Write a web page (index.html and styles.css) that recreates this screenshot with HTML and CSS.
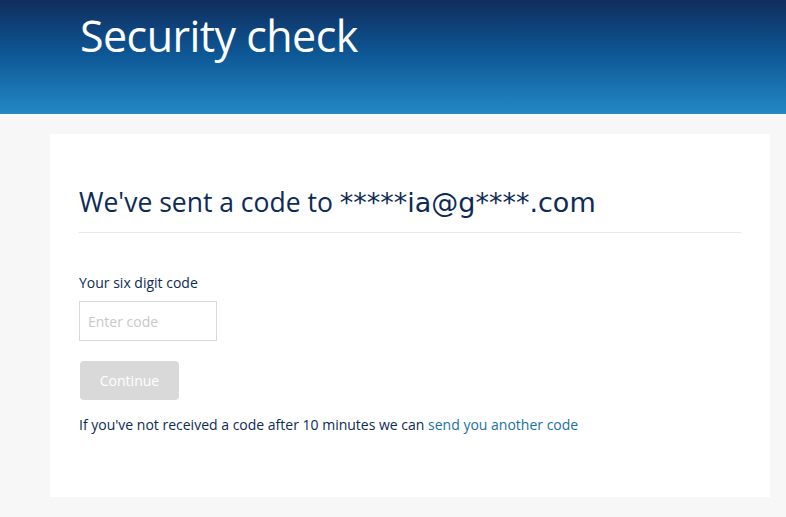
FILE: index.html
```html
<!DOCTYPE html>
<html lang="en">
<head>
<meta charset="utf-8">
<title>Security check</title>
<link rel="stylesheet" href="styles.css">
</head>
<body>
<header class="banner">
  <h1 class="banner-title">Security check</h1>
</header>
<main class="main">
  <section class="card">
    <h2 class="card-title">We've sent a code to <span class="email">*****ia@g****.com</span></h2>
    <form class="form">
      <label class="label" for="code">Your six digit code</label>
      <input class="input" id="code" type="text" placeholder="Enter code">
      <button class="button" type="button" disabled>Continue</button>
    </form>
    <p class="note">If you've not received a code after 10 minutes we can <a class="link" href="#">send you another code</a></p>
  </section>
</main>
</body>
</html>
```
FILE: styles.css
```css
html, body {
  margin: 0;
  padding: 0;
}
body {
  background: #f7f7f7;
  font-family: "Open Sans", "Noto Sans", sans-serif;
  color: #0d2b55;
}
.banner {
  height: 114px;
  box-sizing: border-box;
  padding: 8px 0 0 80px;
  background: linear-gradient(to bottom, #112d5d 0%, #0d5593 45%, #2388c5 100%);
}
.banner-title {
  margin: 0;
  font-weight: 400;
  font-size: 43px;
  line-height: 56px;
  color: #ffffff;
  letter-spacing: -0.55px;
}
.main {
  padding: 20px 16px 21px 50px;
}
.card {
  background: #ffffff;
  padding: 50px 29px 62px 29px;
}
.card-title {
  margin: 0;
  font-weight: 400;
  font-size: 26.5px;
  line-height: 36px;
  padding-bottom: 11px;
  border-bottom: 1px solid #e8e8e8;
  color: #0d2b55;
}
.email {
  font-family: "DejaVu Sans", sans-serif;
  font-size: 27px;
  letter-spacing: 0;
}
.form {
  display: flex;
  flex-direction: column;
  align-items: flex-start;
  padding-top: 40px;
}
.label {
  font-size: 14px;
  line-height: 20px;
  color: #0d2b55;
  margin-bottom: 8px;
}
.input {
  width: 138px;
  height: 40px;
  box-sizing: border-box;
  border: 1px solid #d9d9d9;
  padding: 0 8px;
  font-family: inherit;
  font-size: 14px;
  margin: 0 0 20px 0;
  outline: none;
}
.input::placeholder {
  color: #c8c8c8;
}
.button {
  width: 99px;
  height: 39px;
  margin-left: 1px;
  border: none;
  border-radius: 4px;
  background: #d9d9d9;
  color: #ffffff;
  font-family: inherit;
  font-size: 14px;
}
.note {
  margin: 15px 0 0 0;
  font-size: 14px;
  line-height: 20px;
  color: #0d2b55;
}
.link {
  color: #1a6fa3;
  text-decoration: none;
}
```
